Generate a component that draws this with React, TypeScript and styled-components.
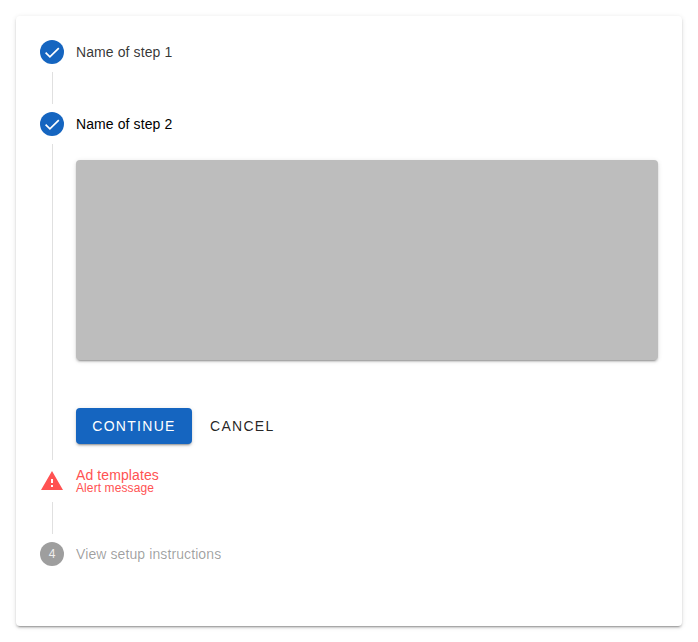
import React from "react";
import styled, { createGlobalStyle } from "styled-components";

const GlobalStyle = createGlobalStyle`
  html, body {
    margin: 0;
    background: #fff;
    font-family: "Liberation Sans", Arial, sans-serif;
  }
`;

const Page = styled.div`
  padding: 16px;
`;

const Paper = styled.div`
  width: 666px;
  height: 610px;
  box-sizing: border-box;
  padding: 16px 24px;
  display: flex;
  flex-direction: column;
  background: #fff;
  border-radius: 4px;
  box-shadow: 0 3px 1px -2px rgba(0, 0, 0, 0.2), 0 2px 2px 0 rgba(0, 0, 0, 0.14),
    0 1px 5px 0 rgba(0, 0, 0, 0.12);
`;

const StepLabel = styled.div`
  display: flex;
  align-items: center;
  gap: 12px;
  padding: 8px 0;
`;

const IconSlot = styled.span`
  display: flex;
  flex: 0 0 24px;
  width: 24px;
  height: 24px;
`;

const NumberIcon = styled(IconSlot)`
  align-items: center;
  justify-content: center;
  border-radius: 50%;
  background: #9e9e9e;
  color: rgba(255, 255, 255, 0.85);
  font-size: 12px;
`;

type LabelTone = "done" | "active" | "error" | "disabled";

const toneColors: Record<LabelTone, string> = {
  done: "rgba(0, 0, 0, 0.8)",
  active: "#000",
  error: "#ff5252",
  disabled: "rgba(0, 0, 0, 0.38)",
};

const LabelText = styled.div<{ $tone: LabelTone }>`
  font-size: 14px;
  line-height: 16px;
  letter-spacing: 0.1px;
  color: ${({ $tone }) => toneColors[$tone]};
`;

const ErrorTitle = styled.div`
  line-height: 14px;
`;

const Caption = styled.div`
  font-size: 12px;
  line-height: 12px;
`;

const Connector = styled.div`
  margin-left: 12px;
  height: 32px;
  border-left: 1px solid #e0e0e0;
`;

const StepContent = styled.div`
  margin-left: 12px;
  padding: 16px 0 16px 23px;
  border-left: 1px solid #e0e0e0;
`;

const Placeholder = styled.div`
  height: 200px;
  background: #bdbdbd;
  border-radius: 4px;
  box-shadow: 0 3px 1px -2px rgba(0, 0, 0, 0.2), 0 2px 2px 0 rgba(0, 0, 0, 0.14),
    0 1px 5px 0 rgba(0, 0, 0, 0.12);
`;

const Actions = styled.div`
  display: flex;
  margin-top: 48px;
  gap: 2px;
`;

const Button = styled.button<{ $primary?: boolean }>`
  height: 36px;
  min-width: 116px;
  padding: 0 16px;
  border: 0;
  border-radius: 4px;
  font-family: inherit;
  font-size: 14px;
  font-weight: 500;
  letter-spacing: 1.3px;
  color: ${({ $primary }) => ($primary ? "#fff" : "rgba(0, 0, 0, 0.87)")};
  background: ${({ $primary }) => ($primary ? "#1565c0" : "transparent")};
  text-align: ${({ $primary }) => ($primary ? "center" : "left")};
  box-shadow: ${({ $primary }) =>
    $primary
      ? "0 3px 1px -2px rgba(0,0,0,0.2), 0 2px 2px 0 rgba(0,0,0,0.14), 0 1px 5px 0 rgba(0,0,0,0.12)"
      : "none"};
`;

const CheckIcon = () => (
  <IconSlot>
    <svg width="24" height="24" viewBox="0 0 24 24">
      <circle cx="12" cy="12" r="12" fill="#1565c0" />
      <path d="M5.6 12.6l4.3 4.2 8.9-8.7" fill="none" stroke="#fff" strokeWidth="1.7" />
    </svg>
  </IconSlot>
);

const WarningIcon = () => (
  <IconSlot>
    <svg width="24" height="24" viewBox="0 0 24 24">
      <path fill="#ff5252" d="M1 21h22L12 2 1 21zm12-3h-2v-2h2v2zm0-4h-2v-4h2v4z" />
    </svg>
  </IconSlot>
);

export default function App() {
  return (
    <Page>
      <GlobalStyle />
      <Paper>
        <StepLabel>
          <CheckIcon />
          <LabelText $tone="done">Name of step 1</LabelText>
        </StepLabel>
        <Connector />
        <StepLabel>
          <CheckIcon />
          <LabelText $tone="active">Name of step 2</LabelText>
        </StepLabel>
        <StepContent>
          <Placeholder />
          <Actions>
            <Button $primary>CONTINUE</Button>
            <Button>CANCEL</Button>
          </Actions>
        </StepContent>
        <StepLabel>
          <WarningIcon />
          <LabelText $tone="error">
            <ErrorTitle>Ad templates</ErrorTitle>
            <Caption>Alert message</Caption>
          </LabelText>
        </StepLabel>
        <Connector />
        <StepLabel>
          <NumberIcon>4</NumberIcon>
          <LabelText $tone="disabled">View setup instructions</LabelText>
        </StepLabel>
      </Paper>
    </Page>
  );
}
